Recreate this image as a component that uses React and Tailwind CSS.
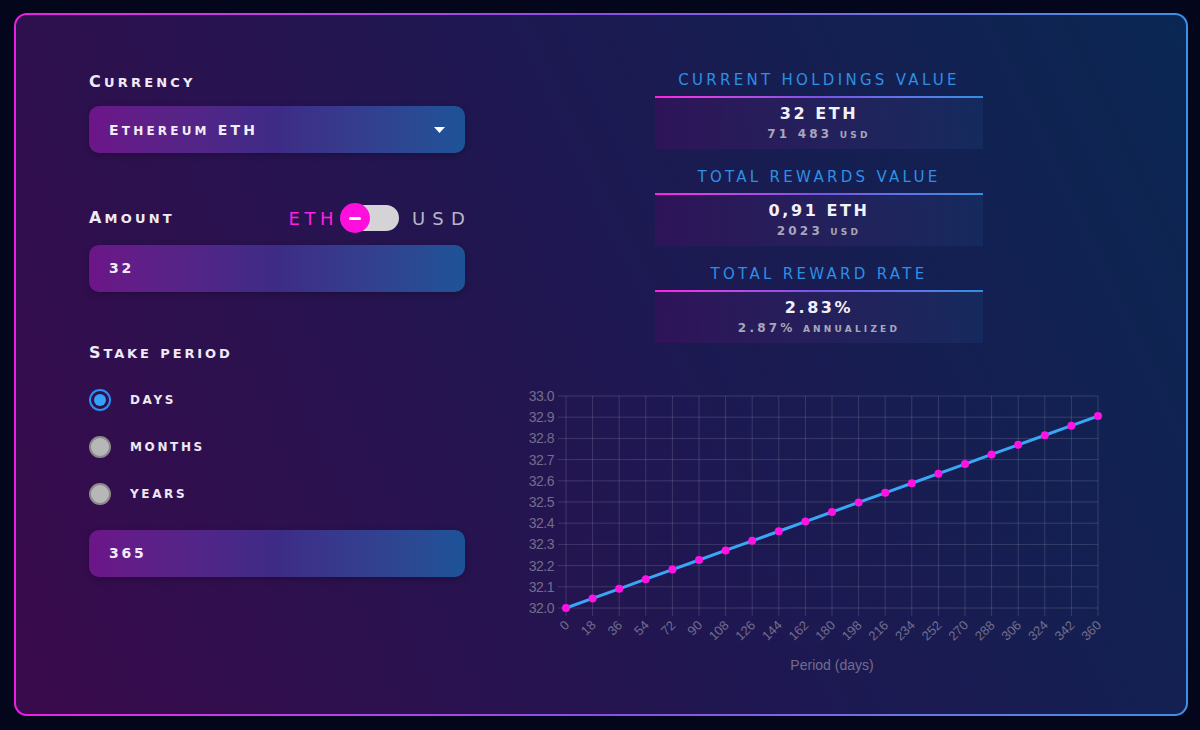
import React from 'react';

const Caps = ({ text, big, small }) => {
    const parts = text.match(/[a-z]+|[^a-z]+/g) || [];
    return parts.map((p, i) =>
        /[a-z]/.test(p) ? (
            <span key={i} className={small}>{p.toUpperCase()}</span>
        ) : (
            <span key={i} className={big}>{p}</span>
        )
    );
};

const Field = ({ children }) => (
    <div className="h-[47px] w-full rounded-[10px] bg-linear-to-r from-[#6c1589] via-[#3d2b86] to-[#1c5398] flex items-center px-[20px] shadow-[0_2px_6px_rgba(0,0,0,0.25)]">
        {children}
    </div>
);

const Radio = ({ label, checked }) => (
    <div className="flex items-center h-[22px]">
        {checked ? (
            <div className="w-[22px] h-[22px] rounded-full border-2 border-[#2a8ef2] p-[3px]">
                <div className="w-full h-full rounded-full bg-[#33a2f8]" />
            </div>
        ) : (
            <div className="w-[22px] h-[22px] rounded-full bg-[#b7b7b7] border-2 border-[#8c8a8c]" />
        )}
        <span className="ml-[19px] text-[12px] font-bold tracking-[0.22em] text-[#ece8f4]">{label}</span>
    </div>
);

const Stat = ({ title, value, sub, first }) => (
    <div className={first ? '' : 'mt-[18px]'}>
        <div className="h-[20px] leading-[20px] text-center text-[15px] tracking-[0.22em] text-[#2e8fe4]">{title}</div>
        <div className="mt-[6px] h-[2px] bg-linear-to-r from-[#ff1ee0] via-[#7a52e6] to-[#2e8fe4]" />
        <div className="h-[51px] pt-[6px] bg-linear-to-r from-[#3a0f5e]/60 to-[#16336a]/50 text-center">
            <div className="h-[20px] leading-[20px] text-[16px] font-bold tracking-[0.16em] text-[#f2f0f8]">{value}</div>
            <div className="mt-[2px] h-[14px] leading-[14px] font-bold tracking-[0.2em] text-[#a9a6ba]">
                <Caps text={sub} big="text-[12px]" small="text-[9px]" />
            </div>
        </div>
    </div>
);

const Chart = () => {
    const PL = 66, PR = 598, PT = 16, PB = 228;
    const days = Array.from({ length: 21 }, (_, i) => i * 18);
    const xOf = (d) => PL + ((PR - PL) * d) / 360;
    const yOf = (v) => PB - (PB - PT) * (v - 32);
    const ys = Array.from({ length: 11 }, (_, i) => 32 + i / 10);
    const pts = days.map((d) => [xOf(d), yOf(32 + (0.918 * d) / 365)]);
    return (
        <svg width="610" height="300" className="block" style={{ fontFamily: '"Liberation Sans", Arial, sans-serif' }}>
            {ys.map((v) => (
                <g key={v}>
                    <line x1={PL - 8} x2={PR} y1={yOf(v)} y2={yOf(v)} stroke="rgba(255,255,255,0.14)" strokeWidth="1" />
                    <text x={PL - 12} y={yOf(v) + 5} textAnchor="end" fontSize="14" letterSpacing="-0.5" fill="#726d8c">{v.toFixed(1)}</text>
                </g>
            ))}
            {days.map((d) => (
                <g key={d}>
                    <line x1={xOf(d)} x2={xOf(d)} y1={PT} y2={PB + 8} stroke="rgba(255,255,255,0.14)" strokeWidth="1" />
                    <text x={xOf(d) + 4} y={PB + 18} textAnchor="end" fontSize="13" fill="#726d8c" transform={`rotate(-45 ${xOf(d) + 4} ${PB + 18})`}>{d}</text>
                </g>
            ))}
            <polyline points={pts.map((p) => p.join(',')).join(' ')} fill="none" stroke="#3aa6f6" strokeWidth="3" />
            {pts.map(([x, y], i) => (
                <circle key={i} cx={x} cy={y} r="4" fill="#ff12e2" />
            ))}
            <text x="332" y="290" textAnchor="middle" fontSize="14" fill="#726d8c">Period (days)</text>
        </svg>
    );
};

export default function App() {
    return (
        <div className="w-[1200px] h-[730px] bg-[#04061c] pt-[13px] pl-[14px] font-['DejaVu_Sans',sans-serif]">
            <div className="w-[1174px] h-[703px] rounded-[13px] p-[2px] bg-linear-to-r from-[#ea1fe2] via-[#8a4ee2] to-[#3a90e8]">
                <div className="w-full h-full rounded-[11px] bg-linear-[65deg] from-[#3a0a4c] via-[#1f1751] via-50% to-[#0a2752] flex">
                    {/* left column */}
                    <div className="w-[376px] ml-[73px] pt-[57px] flex flex-col">
                        <div className="h-[20px] leading-[20px] font-bold tracking-[0.2em] text-[#efeaf6]">
                            <Caps text="Currency" big="text-[16px]" small="text-[13px]" />
                        </div>
                        <div className="mt-[14px]">
                            <Field>
                                <span className="flex-1 font-bold tracking-[0.2em] text-[#f1ecf6]">
                                    <Caps text="Ethereum ETH" big="text-[14px]" small="text-[12px]" />
                                </span>
                                <svg width="11" height="6" viewBox="0 0 11 6"><path d="M0 0h11L5.5 6z" fill="#ffffff" /></svg>
                            </Field>
                        </div>

                        <div className="mt-[50px] h-[30px] flex items-center">
                            <div className="flex-1 font-bold tracking-[0.2em] text-[#efeaf6]">
                                <Caps text="Amount" big="text-[16px]" small="text-[13px]" />
                            </div>
                            <span className="text-[18px] tracking-[0.25em] text-[#ff1fe2]">ETH</span>
                            <div className="relative ml-[3px] w-[58px] h-[26px] rounded-full bg-[#d5d3d6]">
                                <div className="absolute left-[-1px] top-1/2 -translate-y-1/2 w-[30px] h-[30px] rounded-full bg-[#ff0fdc] flex items-center justify-center">
                                    <div className="w-[12px] h-[3px] rounded-full bg-white" />
                                </div>
                            </div>
                            <span className="ml-[13px] mr-[-7px] text-[18px] tracking-[0.4em] text-[#b9b6c6]">USD</span>
                        </div>
                        <div className="mt-[12px]">
                            <Field>
                                <span className="text-[14px] font-bold tracking-[0.2em] text-[#f1ecf6]">32</span>
                            </Field>
                        </div>

                        <div className="mt-[51px] h-[20px] leading-[20px] font-bold tracking-[0.18em] text-[#efeaf6]">
                            <Caps text="Stake period" big="text-[16px]" small="text-[13px]" />
                        </div>
                        <div className="mt-[26px] flex flex-col gap-[25px]">
                            <Radio label="DAYS" checked />
                            <Radio label="MONTHS" />
                            <Radio label="YEARS" />
                        </div>
                        <div className="mt-[25px]">
                            <Field>
                                <span className="text-[14px] font-bold tracking-[0.2em] text-[#f1ecf6]">365</span>
                            </Field>
                        </div>
                    </div>

                    {/* right column */}
                    <div className="ml-[35px] w-[610px] flex flex-col">
                        <div className="ml-[155px] w-[328px] mt-[55px]">
                            <Stat first title="CURRENT HOLDINGS VALUE" value="32 ETH" sub="71 483 usd" />
                            <Stat title="TOTAL REWARDS VALUE" value="0,91 ETH" sub="2023 usd" />
                            <Stat title="TOTAL REWARD RATE" value="2.83%" sub="2.87% annualized" />
                        </div>
                        <div className="mt-[37px]">
                            <Chart />
                        </div>
                    </div>
                </div>
            </div>
        </div>
    );
}
